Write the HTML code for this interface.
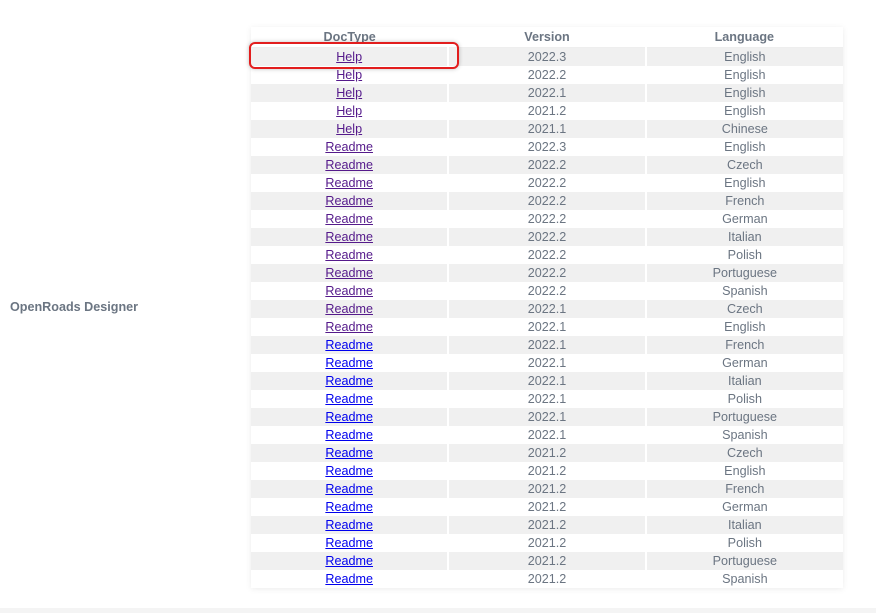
<!DOCTYPE html>
<html><head><style>
body{margin:0;width:876px;height:613px;background:#fff;font-family:"Liberation Sans",sans-serif;position:relative;overflow:hidden}
.lbl{position:absolute;left:10px;top:300px;font-size:12.6px;font-weight:bold;color:#6b7582}
table{position:absolute;left:251px;top:27px;width:592px;border-collapse:collapse;font-size:12.6px;color:#6b7582;box-shadow:0 1px 6px rgba(0,0,0,.08)}
th{height:20px;font-weight:bold;background:#fff;padding:0;border-bottom:1px solid #eee}
td{height:18px;padding:0;text-align:center;border-left:2px solid #fff;line-height:18px}
td:first-child{border-left:none}
th,td{width:33.3%}
tr:nth-child(odd) td{background:#f0f0f0}
tr:nth-child(even) td{background:#fff}
a{color:#551a8b;text-decoration:underline}
a.n{color:#0000ee}
.box{position:absolute;left:249px;top:42px;width:210px;height:27px;border:2px solid #e21d1d;border-radius:6px;box-sizing:border-box;box-shadow:0 0 4px rgba(0,0,0,.25)}
.bot{position:absolute;left:0;top:608px;width:876px;height:5px;background:#f4f4f4}
</style></head><body>
<div class="lbl">OpenRoads Designer</div>
<table>
<thead><tr><th>DocType</th><th>Version</th><th>Language</th></tr></thead>
<tbody>
<tr><td><a>Help</a></td><td>2022.3</td><td>English</td></tr>
<tr><td><a>Help</a></td><td>2022.2</td><td>English</td></tr>
<tr><td><a>Help</a></td><td>2022.1</td><td>English</td></tr>
<tr><td><a>Help</a></td><td>2021.2</td><td>English</td></tr>
<tr><td><a>Help</a></td><td>2021.1</td><td>Chinese</td></tr>
<tr><td><a>Readme</a></td><td>2022.3</td><td>English</td></tr>
<tr><td><a>Readme</a></td><td>2022.2</td><td>Czech</td></tr>
<tr><td><a>Readme</a></td><td>2022.2</td><td>English</td></tr>
<tr><td><a>Readme</a></td><td>2022.2</td><td>French</td></tr>
<tr><td><a>Readme</a></td><td>2022.2</td><td>German</td></tr>
<tr><td><a>Readme</a></td><td>2022.2</td><td>Italian</td></tr>
<tr><td><a>Readme</a></td><td>2022.2</td><td>Polish</td></tr>
<tr><td><a>Readme</a></td><td>2022.2</td><td>Portuguese</td></tr>
<tr><td><a>Readme</a></td><td>2022.2</td><td>Spanish</td></tr>
<tr><td><a>Readme</a></td><td>2022.1</td><td>Czech</td></tr>
<tr><td><a>Readme</a></td><td>2022.1</td><td>English</td></tr>
<tr><td><a class="n">Readme</a></td><td>2022.1</td><td>French</td></tr>
<tr><td><a class="n">Readme</a></td><td>2022.1</td><td>German</td></tr>
<tr><td><a class="n">Readme</a></td><td>2022.1</td><td>Italian</td></tr>
<tr><td><a class="n">Readme</a></td><td>2022.1</td><td>Polish</td></tr>
<tr><td><a class="n">Readme</a></td><td>2022.1</td><td>Portuguese</td></tr>
<tr><td><a class="n">Readme</a></td><td>2022.1</td><td>Spanish</td></tr>
<tr><td><a class="n">Readme</a></td><td>2021.2</td><td>Czech</td></tr>
<tr><td><a class="n">Readme</a></td><td>2021.2</td><td>English</td></tr>
<tr><td><a class="n">Readme</a></td><td>2021.2</td><td>French</td></tr>
<tr><td><a class="n">Readme</a></td><td>2021.2</td><td>German</td></tr>
<tr><td><a class="n">Readme</a></td><td>2021.2</td><td>Italian</td></tr>
<tr><td><a class="n">Readme</a></td><td>2021.2</td><td>Polish</td></tr>
<tr><td><a class="n">Readme</a></td><td>2021.2</td><td>Portuguese</td></tr>
<tr><td><a class="n">Readme</a></td><td>2021.2</td><td>Spanish</td></tr>
</tbody></table>
<div class="box"></div>
<div class="bot"></div>
</body></html>
